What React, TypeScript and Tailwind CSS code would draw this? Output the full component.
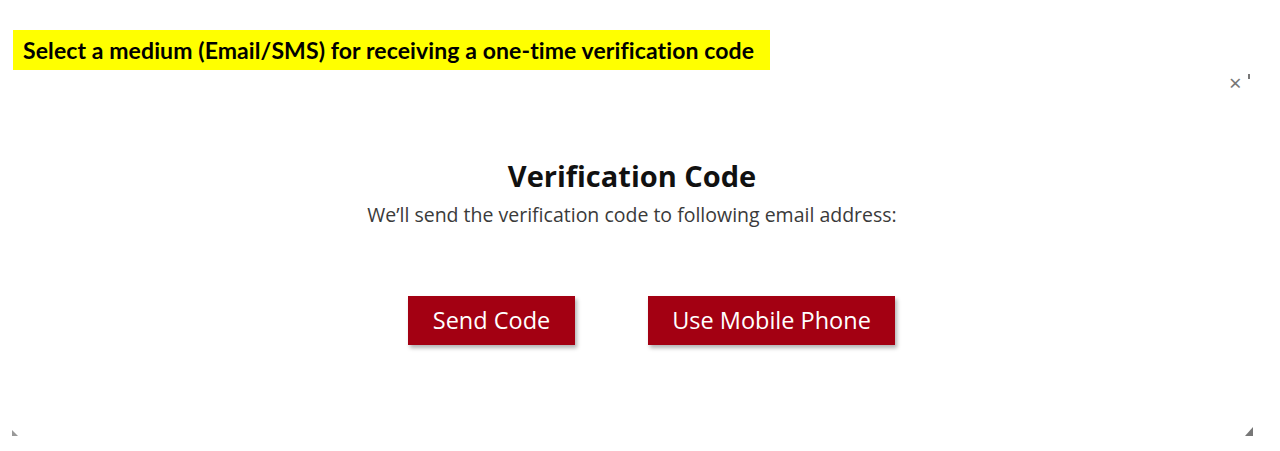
export default function App() {
  return (
    <div className="relative w-full h-[451px] bg-white overflow-hidden">
      <div className="pt-[30px] pl-[13px]">
        <div className="w-[757px] h-[40px] bg-[#ffff00] flex items-center pl-[10px]">
          <p className="text-[23px] font-bold text-black font-['Lato',sans-serif] tracking-[0.1px]">
            Select a medium (Email/SMS) for receiving a one-time verification code
          </p>
        </div>
      </div>

      <div className="relative mx-[12px] w-[1240px] h-[370px] font-['Open_Sans',sans-serif]">
        <div className="flex flex-col items-center pt-[87px]">
          <h2 className="text-[29px] leading-[38px] font-bold text-[#111]">Verification Code</h2>
          <p className="mt-[6px] text-[19.5px] leading-[28px] text-[#3a3a3a]">
            We’ll send the verification code to following email address:
          </p>
        </div>
        <div className="flex gap-[73px] ml-[396px] mt-[67px]">
          <button className="w-[167px] h-[49px] bg-[#a30012] text-white text-[23.5px] shadow-[2px_3px_4px_rgba(0,0,0,0.3)]">
            Send Code
          </button>
          <button className="w-[247px] h-[49px] bg-[#a30012] text-white text-[23.5px] shadow-[2px_3px_4px_rgba(0,0,0,0.3)]">
            Use Mobile Phone
          </button>
        </div>
      </div>

      <span className="absolute left-[1229px] top-[70px] text-[22px] leading-[24px] text-[#777]">×</span>
      <span className="absolute left-[1248px] top-[74px] w-[2px] h-[5px] bg-[#777]" />
      <svg className="absolute left-[12px] top-[430px]" width="6" height="6" viewBox="0 0 6 6">
        <path d="M0 0 L0 6 L6 6 Z" fill="#999" />
      </svg>
      <svg className="absolute left-[1245px] top-[427px]" width="8" height="9" viewBox="0 0 8 9">
        <path d="M8 0 L8 9 L0 9 Z" fill="#777" />
      </svg>
    </div>
  );
}
